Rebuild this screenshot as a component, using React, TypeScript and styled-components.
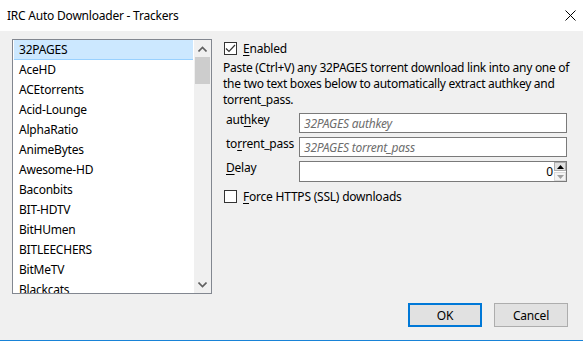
import React from "react";
import styled, { createGlobalStyle } from "styled-components";

const Global = createGlobalStyle`
  html, body { margin: 0; padding: 0; background: #f0f0f0; }
  body { font-family: "Noto Sans", "Open Sans", sans-serif; font-size: 12px; letter-spacing: -0.22px; color: #000; }
  * { box-sizing: border-box; }
`;

const Window = styled.div`
  width: 583px;
  height: 341px;
  display: flex;
  flex-direction: column;
  background: #f0f0f0;
  border-bottom: 1px solid #1883d7;
  overflow: hidden;
`;

const TitleBar = styled.div`
  height: 31px;
  flex: none;
  background: #fff;
  display: flex;
  align-items: center;
  justify-content: space-between;
  padding: 0 5px 1px 7px;
  font-size: 12px;
`;

const CloseBtn = styled.div`
  width: 16px;
  height: 16px;
  display: flex;
  align-items: center;
  justify-content: center;
`;

const Body = styled.div`
  flex: 1;
  display: flex;
  flex-direction: column;
  padding: 8px 15px 0 12px;
`;

const Main = styled.div`
  display: flex;
  gap: 11px;
  height: 255px;
`;

const ListBox = styled.div`
  width: 200px;
  height: 255px;
  border: 1px solid #828790;
  background: #fff;
  display: flex;
  overflow: hidden;
`;

const Items = styled.div`
  flex: 1;
  padding: 0 1px;
  overflow: hidden;
`;

const Item = styled.div<{ $sel?: boolean }>`
  height: 20px;
  line-height: 19px;
  padding-left: 5px;
  white-space: nowrap;
  background: ${(p) => (p.$sel ? "#cce8ff" : "transparent")};
  border-bottom: 1px solid ${(p) => (p.$sel ? "#99d1ff" : "transparent")};
`;

const ScrollBar = styled.div`
  width: 17px;
  background: #f0f0f0;
  display: flex;
  flex-direction: column;
`;

const Arrow = styled.div`
  height: 17px;
  display: flex;
  align-items: center;
  justify-content: center;
`;

const Track = styled.div`
  flex: 1;
  padding: 0 1px;
`;

const Thumb = styled.div`
  height: 27px;
  background: #cdcdcd;
`;

const Panel = styled.div`
  width: 345px;
  display: flex;
  flex-direction: column;
  padding-top: 2px;
`;

const CheckRow = styled.label`
  display: flex;
  align-items: center;
  gap: 6px;
  height: 15px;
  padding-left: 1px;
`;

const Box = styled.span`
  width: 13px;
  height: 13px;
  border: 1px solid #333;
  background: #fff;
  display: flex;
  align-items: center;
  justify-content: center;
`;

const Desc = styled.p`
  margin: 4px 0 0 0;
  line-height: 16px;
  width: 345px;
  white-space: nowrap;
  letter-spacing: -0.28px;
`;

const Form = styled.div`
  display: grid;
  grid-template-columns: 76px 268px;
  row-gap: 4px;
  margin-top: 5px;
`;

const Label = styled.div`
  padding-left: 3px;
  line-height: 16px;
  margin-top: -1px;
`;

const Input = styled.div<{ $h?: number }>`
  height: ${(p) => p.$h ?? 20}px;
  border: 1px solid #7a7a7a;
  background: #fff;
  display: flex;
  align-items: center;
  padding-left: 4px;
`;

const Placeholder = styled.span`
  color: #6d6d6d;
  font-style: italic;
`;

const NumValue = styled.span`
  flex: 1;
  text-align: right;
  padding-right: 1px;
`;

const Spinner = styled.div`
  width: 12px;
  height: 19px;
  display: flex;
  flex-direction: column;
  gap: 1px;
  align-self: flex-start;
`;

const SpinBtn = styled.div<{ $off?: boolean }>`
  flex: 1;
  border: 1px solid ${(p) => (p.$off ? "#dadada" : "#adadad")};
  background: ${(p) => (p.$off ? "#f4f4f4" : "#e1e1e1")};
  display: flex;
  align-items: center;
  justify-content: center;
`;

const ForceRow = styled(CheckRow)`
  margin-top: 7px;
`;

const U = styled.span`
  text-decoration: underline;
  text-underline-offset: 2px;
`;

const Buttons = styled.div`
  display: flex;
  justify-content: flex-end;
  gap: 12px;
  margin-top: 9px;
`;

const Button = styled.div<{ $def?: boolean }>`
  width: 74px;
  height: 24px;
  display: flex;
  align-items: center;
  justify-content: center;
  background: #e1e1e1;
  border: ${(p) => (p.$def ? "2px solid #0078d7" : "1px solid #adadad")};
`;

const trackers = [
  "32PAGES",
  "AceHD",
  "ACEtorrents",
  "Acid-Lounge",
  "AlphaRatio",
  "AnimeBytes",
  "Awesome-HD",
  "Baconbits",
  "BIT-HDTV",
  "BitHUmen",
  "BITLEECHERS",
  "BitMeTV",
  "Blackcats",
];

const Tri = ({ up, color = "#606060" }: { up?: boolean; color?: string }) => (
  <svg width="7" height="4" viewBox="0 0 7 4">
    <path d={up ? "M0 4 L3.5 0 L7 4 Z" : "M0 0 L3.5 4 L7 0 Z"} fill={color} />
  </svg>
);

const Chevron = ({ up }: { up?: boolean }) => (
  <svg width="9" height="6" viewBox="0 0 9 6">
    <path
      d={up ? "M0.5 5.5 L4.5 1.5 L8.5 5.5" : "M0.5 0.5 L4.5 4.5 L8.5 0.5"}
      stroke="#606060"
      strokeWidth="1.6"
      fill="none"
    />
  </svg>
);

export default function App() {
  return (
    <>
      <Global />
      <Window>
        <TitleBar>
          <span>IRC Auto Downloader - Trackers</span>
          <CloseBtn>
            <svg width="11" height="11" viewBox="0 0 11 11">
              <path d="M0.5 0.5 L10.5 10.5 M10.5 0.5 L0.5 10.5" stroke="#000" strokeWidth="1" />
            </svg>
          </CloseBtn>
        </TitleBar>
        <Body>
          <Main>
            <ListBox>
              <Items>
                {trackers.map((t, i) => (
                  <Item key={t} $sel={i === 0}>
                    {t}
                  </Item>
                ))}
              </Items>
              <ScrollBar>
                <Arrow>
                  <Chevron up />
                </Arrow>
                <Track>
                  <Thumb />
                </Track>
                <Arrow>
                  <Chevron />
                </Arrow>
              </ScrollBar>
            </ListBox>
            <Panel>
              <CheckRow>
                <Box>
                  <svg width="11" height="9" viewBox="0 0 11 9">
                    <path d="M1 4.5 L4 7.5 L10 1" stroke="#333" strokeWidth="1.2" fill="none" />
                  </svg>
                </Box>
                <span>
                  <U>E</U>nabled
                </span>
              </CheckRow>
              <Desc>
                Paste (Ctrl+V) any 32PAGES torrent download link into any one of
                <br />
                the two text boxes below to automatically extract authkey and
                <br />
                torrent_pass.
              </Desc>
              <Form>
                <Label>
                  aut<U>h</U>key
                </Label>
                <Input>
                  <Placeholder>32PAGES authkey</Placeholder>
                </Input>
                <Label>
                  to<U>r</U>rent_pass
                </Label>
                <Input>
                  <Placeholder>32PAGES torrent_pass</Placeholder>
                </Input>
                <Label>
                  <U>D</U>elay
                </Label>
                <Input $h={21}>
                  <NumValue>0</NumValue>
                  <Spinner>
                    <SpinBtn>
                      <Tri up color="#000" />
                    </SpinBtn>
                    <SpinBtn $off>
                      <Tri color="#a0a0a0" />
                    </SpinBtn>
                  </Spinner>
                </Input>
              </Form>
              <ForceRow>
                <Box />
                <span>
                  <U>F</U>orce HTTPS (SSL) downloads
                </span>
              </ForceRow>
            </Panel>
          </Main>
          <Buttons>
            <Button $def>OK</Button>
            <Button>Cancel</Button>
          </Buttons>
        </Body>
      </Window>
    </>
  );
}
